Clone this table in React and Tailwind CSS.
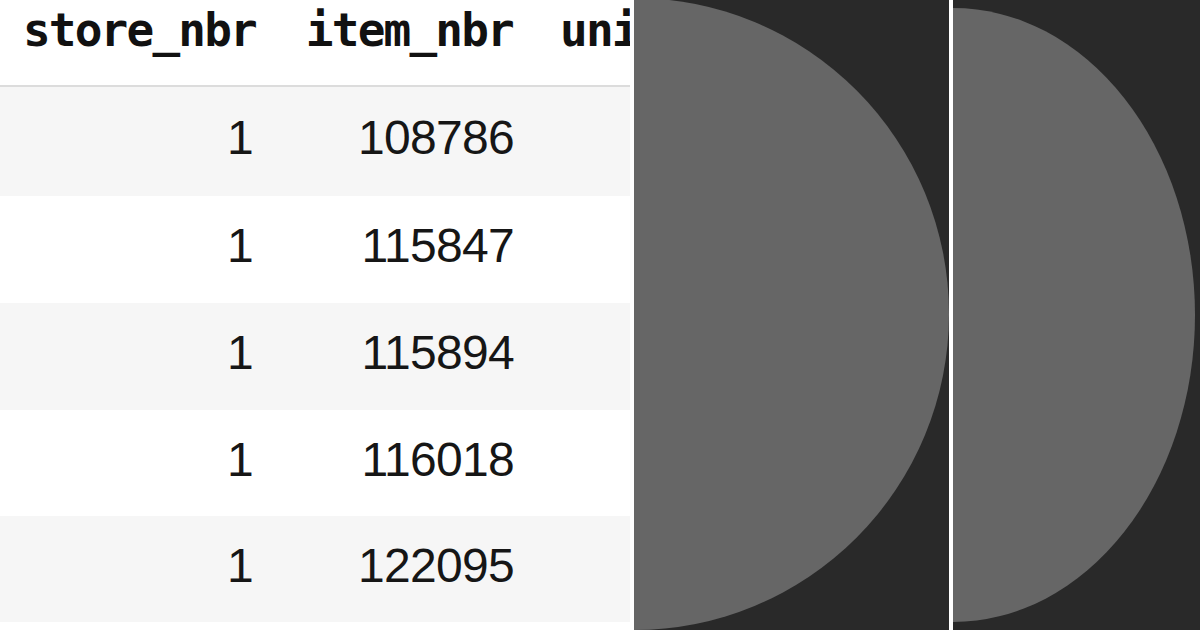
import React from "react";

const rows = [
  { store: "1", item: "108786", h: "h-[109px]", bg: "bg-[#f6f6f6]" },
  { store: "1", item: "115847", h: "h-[107px]", bg: "bg-white" },
  { store: "1", item: "115894", h: "h-[107px]", bg: "bg-[#f6f6f6]" },
  { store: "1", item: "116018", h: "h-[106px]", bg: "bg-white" },
  { store: "1", item: "122095", h: "h-[106px]", bg: "bg-[#f6f6f6]" },
];

export default function App() {
  return (
    <div className="w-[1200px] h-[630px] flex overflow-hidden bg-white">
      <div className="w-[630px] h-[630px] shrink-0 overflow-hidden flex flex-col bg-white">
        <div className="h-[85px] shrink-0 flex font-['DejaVu_Sans_Mono',monospace] font-bold text-[46px] leading-none tracking-[-1.8px] text-[#111111] pt-[7px] whitespace-nowrap">
          <div className="w-[280px] shrink-0 text-right pr-[24px]">store_nbr</div>
          <div className="w-[258px] shrink-0 text-right pr-[25px]">item_nbr</div>
          <div className="flex-1 pl-[22px] overflow-hidden">unit_sales</div>
        </div>
        <div className="h-[2px] shrink-0 bg-[#dcdcdc]" />
        {rows.map((r, i) => (
          <div
            key={i}
            className={`${r.h} ${r.bg} shrink-0 flex items-center pb-[7px] font-['Liberation_Sans',Arial,sans-serif] text-[48px] leading-none tracking-[-0.7px] text-[#161616] whitespace-nowrap`}
          >
            <div className="w-[280px] shrink-0 text-right pr-[27px]">{r.store}</div>
            <div className="w-[258px] shrink-0 text-right pr-[24px]">{r.item}</div>
            <div className="flex-1" />
          </div>
        ))}
        <div className="flex-1 bg-white" />
      </div>
      <div className="w-[4px] shrink-0 bg-white" />
      <div className="w-[315px] shrink-0 h-[630px] bg-[#292929] flex items-center overflow-hidden">
        <div className="w-[315px] h-[632px] mb-[2px] shrink-0 rounded-r-[315px_316px] bg-[#666666]" />
      </div>
      <div className="w-[4px] shrink-0 bg-white" />
      <div className="flex-1 h-[630px] bg-[#292929] flex items-center overflow-hidden">
        <div className="w-[242px] h-[614px] shrink-0 rounded-r-[242px_307px] bg-[#666666]" />
      </div>
    </div>
  );
}
